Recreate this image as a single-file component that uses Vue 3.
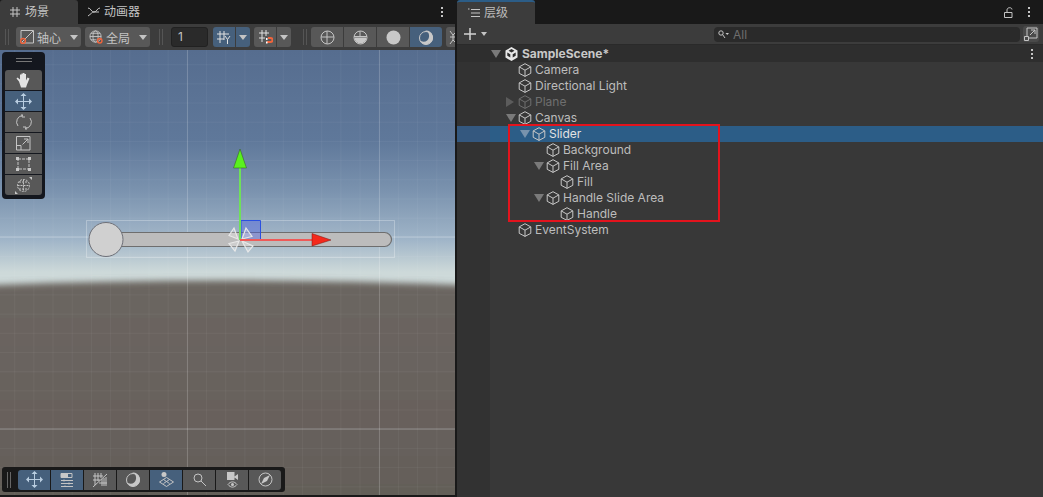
<script setup>
const tree = [
  { name: 'Camera', depth: 0 },
  { name: 'Directional Light', depth: 0 },
  { name: 'Plane', depth: 0, arrow: 'right', dim: true },
  { name: 'Canvas', depth: 0, arrow: 'down' },
  { name: 'Slider', depth: 1, arrow: 'down', selected: true },
  { name: 'Background', depth: 2 },
  { name: 'Fill Area', depth: 2, arrow: 'down' },
  { name: 'Fill', depth: 3 },
  { name: 'Handle Slide Area', depth: 2, arrow: 'down' },
  { name: 'Handle', depth: 3 },
  { name: 'EventSystem', depth: 0 }
]

const indent = depth => 61 + depth * 14 + 'px'
</script>

<template>
  <div class="editor">
    <section class="panel scene-panel">
      <div class="tabs">
        <div class="tab active">
          <svg width="10" height="10" viewBox="0 0 10 10" class="ic"><path d="M3 0v10M7 0v10M0 3h10M0 7h10" /></svg>
          <span>场景</span>
        </div>
        <div class="tab">
          <svg width="12" height="10" viewBox="0 0 12 10" class="ic"><path d="M0 1c3 0 3 4 6 4s3-4 6-4M6 5c-2 0-3 2-6 4M6 5h5" /></svg>
          <span>动画器</span>
        </div>
        <div class="kebab"><i></i><i></i><i></i></div>
      </div>

      <div class="toolbar">
        <div class="grip first"></div>
        <button class="drop wide">
          <svg width="14" height="14" viewBox="0 0 14 14" class="ic"><path d="M1 .5h12.500V13H2M1 .5V9M2 12L13 1" /><circle cx="3" cy="11" r="2.400" class="orange" /></svg>
          <span>轴心</span><b class="caret"></b>
        </button>
        <button class="drop wide">
          <svg width="14" height="14" viewBox="0 0 15 15" class="ic"><circle cx="7" cy="7" r="6" /><ellipse cx="7" cy="7" rx="2.800" ry="6" /><path d="M1 7h12M2 3.500h10M2 10.500h6" /><circle cx="11.500" cy="11.500" r="2.400" class="orange" /></svg>
          <span>全局</span><b class="caret"></b>
        </button>
        <div class="grip second"></div>
        <div class="num">1</div>
        <button class="snap blue">
          <svg width="14" height="13" viewBox="0 0 14 13" class="ic"><path d="M3 0v12M7 0v9M0 3h12M0 8h7M8 5l2.500 3.500L13 5M10.500 8.500V13" /></svg>
        </button>
        <button class="snap-drop blue"><b class="caret"></b></button>
        <button class="snap second-snap">
          <svg width="15" height="14" viewBox="0 0 15 14" class="ic"><path d="M4 0v12M8 0v6M1 3h10M1 8h6" /><path d="M10 8h2.500a2 2 0 0 1 0 4H9" class="magnet" /><path d="M8 9h1.500M8 12.500h1.500" class="white" /></svg>
        </button>
        <button class="snap-drop"><b class="caret"></b></button>
        <div class="grip third"></div>
        <div class="shading">
          <button class="shade">
            <svg width="15" height="15" viewBox="0 0 15 15" class="ic"><circle cx="7.500" cy="7.500" r="6.500" /><path d="M1 7h13M7 1v13" /></svg>
          </button>
          <button class="shade">
            <svg width="15" height="15" viewBox="0 0 15 15" class="ic"><circle cx="7.500" cy="7.500" r="6.500" /><path d="M1 6.500h13M7 1v5.500" /><path d="M1.500 7.500h12a6 6 0 0 1-12 0z" class="solid" /></svg>
          </button>
          <button class="shade">
            <svg width="15" height="15" viewBox="0 0 15 15"><circle cx="7.500" cy="7.500" r="7" class="solid" /></svg>
          </button>
          <button class="shade blue">
            <svg width="15" height="15" viewBox="0 0 15 15"><path d="M6 .5a7 7 0 1 1-5.500 9.500c3 3 9 2 9.500-3S8 1.500 6 .5z" class="solid" /><circle cx="7" cy="8" r="6.500" class="thin" /></svg>
          </button>
        </div>
        <button class="cut">
          <svg width="10" height="16" viewBox="0 0 10 16" class="ic"><path d="M1 2l3 4 4-4M4 6v5l-3 4M4 11l4 4M1 8h7" /></svg>
        </button>
      </div>

      <div class="viewport">
        <svg class="ground" width="455" height="445" viewBox="0 50 455 445">
          <defs>
            <filter id="soft" x="-5%" y="-5%" width="110%" height="110%"><feGaussianBlur stdDeviation="3" /></filter>
            <linearGradient id="earth" x1="0" y1="0" x2="0" y2="1">
              <stop offset="0" stop-color="#6c6661" />
              <stop offset="1" stop-color="#635d58" />
            </linearGradient>
          </defs>
          <path d="M-30 286Q227 275 485 286V530H-30z" fill="url(#earth)" filter="url(#soft)" />
        </svg>
        <div class="grid"></div>

        <svg class="gizmos" width="455" height="445" viewBox="0 50 455 445">
          <rect x="86.500" y="220.500" width="308" height="37" class="bounds" />
          <rect x="115" y="232.500" width="276.500" height="14" rx="7" class="track" />
          <circle cx="106" cy="239.500" r="17" class="knob" />
          <path d="M241 240V220.500H260.500V240z" class="z-plane" />
          <path d="M234 228L229 235.500 238 239z M246 228L252 236.500 242 239z M229 243.500L239 241 235 251z M242 241L253 246 248 252z" class="pivot" />
          <path d="M240 240V166" class="y-axis" />
          <path d="M240 240H313" class="x-axis" />
          <path d="M240 149l6.500 19h-13z" class="y-cone" />
          <path d="M331 240l-19 6v-12.500z" class="x-cone" />
        </svg>

        <div class="tools">
          <div class="tools-grip"></div>
          <button class="tool">
            <svg width="16" height="17" viewBox="0 0 16 16"><path d="M3 9L.5 6l1-1L4 7V2h1.500v4V1H7v5V.5h1.500V6V1.500H10V8l1.500-3L13.500 6l-2.500 6-1 3H5z" class="solid bright" /></svg>
          </button>
          <button class="tool blue">
            <svg width="17" height="17" viewBox="0 0 17 17" class="ic pale"><path d="M8.500 3v11M3 8.500h11" /><path d="M8.500 0l3 3h-6zM8.500 17l3-3h-6zM0 8.500l3-3v6zM17 8.500l-3-3v6z" class="fill-pale" /></svg>
          </button>
          <button class="tool">
            <svg width="16" height="16" viewBox="0 0 16 16" class="ic"><path d="M2 12a6.500 6.500 0 0 1 5-10.500M14 4a6.500 6.500 0 0 1-5 10.500M6 0v3h3M10 16v-3H7" /></svg>
          </button>
          <button class="tool">
            <svg width="15" height="15" viewBox="0 0 15 15" class="ic"><path d="M.5.500h13.500v13.500H.5zM.5 9.500h4.500V14M6.500 8.500L12 3M8 3h4v4" /></svg>
          </button>
          <button class="tool">
            <svg width="15" height="14" viewBox="0 0 15 14" class="ic"><path d="M2 2h11v10H2z" stroke-dasharray="3 1" /><path d="M0 0h3v3H0zM12 0h3v3h-3zM0 11h3v3H0zM12 11h3v3h-3z" class="solid" /></svg>
          </button>
          <button class="tool">
            <svg width="17" height="17" viewBox="0 0 17 17" class="ic"><circle cx="8.500" cy="8.500" r="6" stroke-dasharray="2 1" /><path d="M8.500 2.500v12M2.500 8.500h12M4 5h9M4 12h9" stroke-dasharray="2 1" /><path d="M14 0h3v3zM0 17h3l-3-3z" class="solid" /></svg>
          </button>
        </div>

        <div class="overlays">
          <div class="bar-grip"></div>
          <button class="ov blue">
            <svg width="17" height="17" viewBox="0 0 17 17" class="ic pale"><path d="M8.500 3v11M3 8.500h11" /><path d="M8.500 0l3 3h-6zM8.500 17l3-3h-6zM0 8.500l3-3v6zM17 8.500l-3-3v6z" class="fill-pale" /></svg>
          </button>
          <button class="ov blue">
            <svg width="14" height="14" viewBox="0 0 14 14" class="ic"><path d="M1 7.500h12M1 10.500h12M1 13.500h12M4 6.500v2M9 9.500v2M5 12.500v1.500" /><path d="M1 .5h11v4H1z" /><path d="M1 .5h7v4H1z" class="solid" /></svg>
          </button>
          <button class="ov">
            <svg width="15" height="15" viewBox="0 0 15 15" class="ic"><path d="M2 1v12M5 1v8M8 1v5M0 4h10M0 8h7M14 2L0 15M9 7v7M11 6v8M13 5v9M6 11h8" /></svg>
          </button>
          <button class="ov">
            <svg width="15" height="15" viewBox="0 0 15 15"><path d="M6 .5a7 7 0 1 1-5.500 9.500c3 3 9 2 9.500-3S8 1.500 6 .5z" class="solid" /><circle cx="7" cy="8" r="6.500" class="thin" /></svg>
          </button>
          <button class="ov blue">
            <svg width="15" height="15" viewBox="0 0 15 15" class="ic"><circle cx="5" cy="2.500" r="2.500" class="solid" /><path d="M7.500 5.500l7 4.500-7 4.500L.5 10zM4.500 7.500l6 4M10.500 7.500l-6 4" /></svg>
          </button>
          <button class="ov">
            <svg width="13" height="13" viewBox="0 0 13 13" class="ic"><circle cx="5" cy="5" r="4" /><path d="M8 8l5 5" /></svg>
          </button>
          <button class="ov">
            <svg width="13" height="16" viewBox="0 0 13 16" class="ic"><path d="M1 0h7.500v4.500L12 2v6L8.500 5.500V8H1z" class="solid" /><path d="M2 12.500c2.500-3.500 6.500-3.500 9 0-2.500 3.500-6.500 3.500-9 0z" /><circle cx="6.500" cy="12.500" r="1.500" class="solid" /></svg>
          </button>
          <button class="ov">
            <svg width="15" height="15" viewBox="0 0 15 15" class="ic"><circle cx="7.500" cy="7.500" r="6.500" /><path d="M3 12l3-6 6-3-3 6z" class="solid" /></svg>
          </button>
        </div>
      </div>
    </section>

    <section class="panel hierarchy">
      <div class="tabs">
        <div class="tab active h-tab">
          <svg width="12" height="10" viewBox="0 0 12 10" class="ic"><path d="M3 1.500h9M3 5h9M3 8.500h9M0 1h1.500" /></svg>
          <span>层级</span>
        </div>
        <div class="lock">
          <svg width="9" height="11" viewBox="0 0 9 11" class="ic"><path d="M.5 5.500h7.500v5H.5zM3 5.500V3c0-3 5-3 5-.5" /></svg>
        </div>
        <div class="kebab"><i></i><i></i><i></i></div>
      </div>

      <div class="h-toolbar">
        <svg width="12" height="12" viewBox="0 0 12 12" class="plus"><path d="M6 0v12M0 6h12" /></svg>
        <b class="caret small"></b>
        <div class="search">
          <svg width="11" height="9" viewBox="0 0 11 9" class="ic"><circle cx="3" cy="3" r="2.200" /><path d="M4.500 4.500L7 8" /><path d="M7.500 3h3.500L9.200 5z" class="solid" /></svg>
          <span>All</span>
        </div>
        <button class="scale-btn">
          <svg width="14" height="14" viewBox="0 0 14 14" class="ic"><path d="M3 9V1h10v10H5M6 8l5-5M7 3h4v4" /><path d="M.5 9.500h4v4h-4z" /></svg>
        </button>
      </div>

      <div class="scene-row">
        <b class="arrow down"></b>
        <svg width="13" height="14" viewBox="0 0 13 14" class="unity"><path d="M6.500 0L12.500 3.500V10.500L6.500 14L.5 10.500V3.500z" /><path d="M6.500 2L9.500 3.800L6.500 5.500L3.500 3.800zM2.300 5.500L5.300 7.300V10.500L2.300 8.700zM10.700 5.500L7.700 7.300V10.500L10.700 8.700z" class="unity-cut" /></svg>
        <span>SampleScene*</span>
        <div class="kebab row-kebab"><i></i><i></i><i></i></div>
      </div>

      <div class="list">
        <div
          v-for="item in tree"
          :key="item.name"
          class="row"
          :class="{ selected: item.selected, dim: item.dim }"
          :style="{ paddingLeft: indent(item.depth) }"
        >
          <b v-if="item.arrow" class="arrow" :class="item.arrow"></b>
          <svg width="14" height="14" viewBox="0 0 14 14" class="cube"><path d="M7 .7l5.800 3.200v6.400L7 13.400l-5.800-3.100V3.900zM1.200 3.900L7 7.200l5.800-3.300M7 7.200v6.200" /></svg>
          <span>{{ item.name }}</span>
        </div>
        <div class="callout"></div>
      </div>
    </section>
  </div>
</template>

<style>
html, body { background: #191919; }
</style>

<style scoped>
* { box-sizing: border-box; }
.editor {
  width: 1043px;
  height: 497px;
  display: flex;
  gap: 2px;
  overflow: hidden;
  background: #191919;
  color: #c4c4c4;
  font-family: Inter, "Noto Sans CJK SC", sans-serif;
  font-size: 12px;
}
button {
  border: 0;
  padding: 0;
  display: flex;
  align-items: center;
  justify-content: center;
  background: #585858;
  color: inherit;
  font: inherit;
  flex: none;
}
.ic { fill: none; stroke: #c4c4c4; stroke-width: 1; flex: none; }
.ic.pale { stroke: #b9cde0; }
.solid { fill: #c8c8c8; stroke: none; }
.solid.bright { fill: #e4e4e4; }
.thin { fill: none; stroke: #c8c8c8; stroke-width: 1; }
.orange { fill: none; stroke: #f0643c; stroke-width: 1.500; }
.magnet { stroke: #f0643c; stroke-width: 2; }
.white { stroke: #fff; stroke-width: 2; }
.fill-pale { fill: #b9cde0; stroke: none; }
.snap .ic { stroke: #e0e0e0; }
.snap .magnet { stroke: #f0643c; }
.snap .white { stroke: #fff; }

.panel { height: 497px; display: flex; flex-direction: column; }
.scene-panel { width: 455px; flex: none; padding-bottom: 2px; }
.hierarchy { flex: 1; min-width: 0; background: #383838; }

.tabs {
  height: 24px;
  flex: none;
  display: flex;
  align-items: center;
  background: #191919;
}
.tab {
  width: 78px;
  height: 24px;
  display: flex;
  align-items: center;
  gap: 5px;
  padding-left: 10px;
  border-radius: 3px 3px 0 0;
  line-height: 24px;
}
.tab.active { background: #3c3c3c; }
.tab:not(.active) { padding-left: 10px; gap: 4px; }
.h-tab { border-top: 2px solid #2c5d87; padding: 0 0 0 11px; gap: 4px; height: 24px; color: #bdbdbd; }
.kebab {
  margin-left: auto;
  width: 3px;
  margin-right: 11px;
  display: flex;
  flex-direction: column;
  gap: 2px;
}
.kebab i { width: 2px; height: 2px; background: #c4c4c4; display: block; }
.lock { margin-left: auto; display: flex; }
.lock + .kebab { margin-left: 15px; margin-right: 12px; }

.toolbar {
  height: 26px;
  flex: none;
  display: flex;
  align-items: center;
  overflow: hidden;
  background: #3c3c3c;
}
.grip {
  width: 4px;
  height: 16px;
  flex: none;
  border-left: 1px solid #555;
  border-right: 1px solid #555;
}
.grip.first { margin: 0 7px 0 5px; }
.grip.second { margin: 0 8px 0 5px; }
.grip.third { margin: 0 4px 0 12px; }
.drop {
  height: 20px;
  width: 65px;
  margin-right: 4px;
  border-radius: 3px;
  justify-content: flex-start;
  padding-left: 4px;
  gap: 3px;
}
.caret {
  width: 0;
  height: 0;
  border-left: 4.500px solid transparent;
  border-right: 4.500px solid transparent;
  border-top: 5px solid #c4c4c4;
  display: block;
  flex: none;
}
.drop .caret { margin-left: 6px; }
.caret.small { border-left-width: 3.500px; border-right-width: 3.500px; border-top-width: 4px; margin-left: 5px; }
.num {
  width: 37px;
  height: 20px;
  margin-right: 5px;
  padding-left: 6px;
  border-radius: 3px;
  border: 1px solid #212121;
  background: #2a2a2a;
  line-height: 18px;
  flex: none;
}
.snap { width: 22px; height: 20px; border-radius: 3px 0 0 3px; margin-right: 1px; }
.snap-drop { width: 14px; height: 20px; border-radius: 0 3px 3px 0; }
.second-snap { margin-left: 4px; }
.blue { background: #46607c; }
.shading { display: flex; gap: 1px; margin-left: 0; flex: none; }
.shade { width: 32px; height: 20px; }
.shade:first-child { border-radius: 3px 0 0 3px; }
.shade:last-child { border-radius: 0 3px 3px 0; }
.cut { width: 20px; height: 20px; margin-left: 4px; justify-content: flex-start; padding-left: 3px; border-radius: 3px; }

.viewport {
  flex: 1;
  position: relative;
  overflow: hidden;
  background: linear-gradient(
    #566d8f 0,
    #5f789a 90px,
    #7a92ae 140px,
    #a0b5c8 190px,
    #cdd9d9 222px,
    #cfdbda 445px
  );
}
.ground { position: absolute; left: 0; top: 0; }
.grid {
  position: absolute;
  inset: 0;
  background-image:
    linear-gradient(90deg, rgba(255, 255, 255, .16) 1px, transparent 1px),
    linear-gradient(rgba(255, 255, 255, .14) 2px, transparent 2px),
    linear-gradient(90deg, rgba(255, 255, 255, .04) 1px, transparent 1px),
    linear-gradient(rgba(255, 255, 255, .04) 1px, transparent 1px);
  background-size: 192px 192px, 192px 192px, 19.200px 19.200px, 19.200px 19.200px;
  background-position: 187px 0, 0 186px, 14.200px 0, 0 14.200px;
}
.gizmos { position: absolute; left: 0; top: 0; }
.bounds { fill: rgba(255, 255, 255, .03); stroke: rgba(255, 255, 255, .28); }
.track { fill: #bcbcbc; stroke: #6e6e6e; stroke-width: 1.200; }
.knob { fill: #d0d0d0; stroke: #6e7078; stroke-width: 1; }
.z-plane { fill: rgba(70, 90, 230, .4); stroke: #2b50e0; stroke-width: 1; }
.pivot { fill: rgba(255, 255, 255, .25); stroke: #e8e8e8; stroke-width: 1.200; }
.y-axis { stroke: #6fe05a; stroke-width: 2; }
.x-axis { stroke: #ef5a58; stroke-width: 2; }
.y-cone { fill: #5af01e; stroke: #2d5a18; stroke-width: .5; }
.x-cone { fill: #f4291c; stroke: #7a1410; stroke-width: .5; }

.tools {
  position: absolute;
  left: 2px;
  top: 2px;
  width: 43px;
  height: 147px;
  padding: 18px 3px 0;
  display: flex;
  flex-direction: column;
  gap: 1px;
  border-radius: 4px;
  background: #14171e;
}
.tools-grip {
  position: absolute;
  left: 14px;
  top: 6px;
  width: 16px;
  height: 4px;
  border-top: 1px solid #777;
  border-bottom: 1px solid #777;
}
.tool { width: 37px; height: 20px; }
.tool:first-of-type { border-radius: 3px 3px 0 0; }
.tool:last-child { border-radius: 0 0 3px 3px; }

.overlays {
  position: absolute;
  left: 2px;
  bottom: 3px;
  width: 283px;
  height: 25px;
  display: flex;
  align-items: center;
  gap: 1px;
  padding-left: 16px;
  border-radius: 3px;
  background: #191919;
}
.bar-grip {
  position: absolute;
  left: 5px;
  top: 5px;
  width: 4px;
  height: 16px;
  border-left: 1px solid #666;
  border-right: 1px solid #666;
}
.ov { width: 32px; height: 20px; }
.ov:first-of-type { border-radius: 3px 0 0 3px; }
.ov:last-child { border-radius: 0 3px 3px 0; }

.h-toolbar {
  height: 21px;
  flex: none;
  display: flex;
  align-items: center;
  padding-left: 7px;
  background: #3c3c3c;
  border-bottom: 1px solid #2a2a2a;
}
.plus { fill: none; stroke: #d2d2d2; stroke-width: 1.500; flex: none; }
.search {
  width: 306px;
  height: 15px;
  margin-left: 227px;
  padding-left: 4px;
  display: flex;
  align-items: center;
  gap: 4px;
  border-radius: 4px;
  background: #2a2a2a;
  color: #6e6e6e;
  line-height: 15px;
  flex: none;
}
.scale-btn { width: 16px; height: 16px; margin-left: 3px; border-radius: 3px; background: #4a4a4a; }

.scene-row {
  height: 17px;
  flex: none;
  display: flex;
  align-items: center;
  padding-left: 34px;
  background: #2e2e2e;
  font-weight: 700;
  color: #c8c8c8;
  line-height: 16px;
}
.unity { fill: #e8e8e8; margin: 0 4px 0 4px; flex: none; }
.unity-cut { fill: #2e2e2e; }
.row-kebab { margin-right: 9px; }
.arrow {
  width: 0;
  height: 0;
  display: block;
  flex: none;
}
.arrow.down {
  border-left: 5px solid transparent;
  border-right: 5px solid transparent;
  border-top: 8px solid #7a7a7a;
}
.arrow.right {
  border-top: 5px solid transparent;
  border-bottom: 5px solid transparent;
  border-left: 8px solid #5c5c5c;
  margin-right: 2px;
}

.list {
  flex: 1;
  position: relative;
  background: linear-gradient(90deg, #323232 33px, #383838 33px);
}
.row {
  height: 16px;
  display: flex;
  align-items: center;
  position: relative;
  line-height: 16px;
  color: #bdbdbd;
}
.row > .arrow { position: absolute; margin-left: -12px; }
.cube { fill: none; stroke: #c8c8c8; stroke-width: 1; margin-right: 3px; flex: none; }
.row.selected { background: linear-gradient(90deg, #34587f 33px, #2c5d87 33px); color: #e2e2e2; }
.row.selected .arrow.down { border-top-color: #7893ad; }
.row.dim { color: #6f6f6f; }
.row.dim .cube { stroke: #6f6f6f; }
.callout {
  position: absolute;
  left: 51px;
  top: 62px;
  width: 212px;
  height: 98px;
  border: 2px solid #e3131d;
  pointer-events: none;
}
</style>
